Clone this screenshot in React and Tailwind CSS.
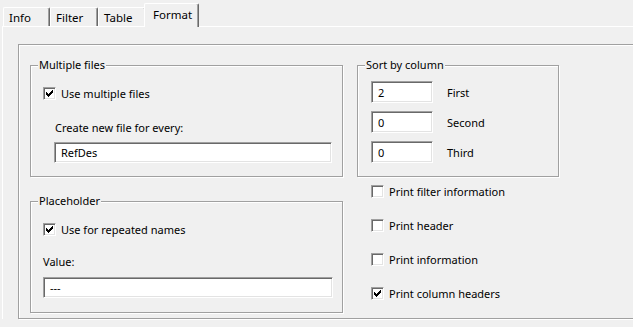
import React from 'react'

const sunken =
  'border border-t-[#a0a0a0] border-l-[#a0a0a0] border-b-white border-r-white shadow-[inset_1px_1px_0_#696969,inset_-1px_-1px_0_#e3e3e3] bg-white'

const etched = 'border border-[#a0a0a0] shadow-[inset_1px_1px_0_#ffffff,1px_1px_0_#ffffff]'

function Check({ checked }) {
  return (
    <span className={`${sunken} relative block h-[13px] w-[13px] shrink-0`}>
      {checked && (
        <svg
          width="7"
          height="7"
          viewBox="0 0 7 7"
          className="absolute left-[2px] top-[2px]"
          shapeRendering="crispEdges"
        >
          <path
            d="M0 2h1v3H0z M1 3h1v3H1z M2 4h1v3H2z M3 3h1v3H3z M4 2h1v3H4z M5 1h1v3H5z M6 0h1v3H6z"
            fill="#000"
          />
        </svg>
      )}
    </span>
  )
}

function CheckRow({ checked, label }) {
  return (
    <div className="flex h-[15px] items-center gap-[5px]">
      <Check checked={checked} />
      <span className="whitespace-nowrap">{label}</span>
    </div>
  )
}

function Field({ value, className }) {
  return (
    <div className={`${sunken} flex items-center pl-[6px] ${className}`}>
      <span className="whitespace-nowrap">{value}</span>
    </div>
  )
}

function GroupBox({ title, className, children }) {
  return (
    <div className={`${etched} relative ${className}`}>
      <span className="absolute -top-[9px] left-[7px] whitespace-nowrap bg-[#f0f0f0] px-[1px] leading-[15px]">
        {title}
      </span>
      {children}
    </div>
  )
}

function Tab({ label, active, className }) {
  if (active) {
    return (
      <div
        className={`relative z-10 -mb-px flex h-[24px] items-center rounded-t-[2px] border-l border-t border-r border-l-white border-t-white border-r-[#696969] bg-[#f0f0f0] pb-[3px] pl-[8px] shadow-[inset_-1px_0_0_#a0a0a0] ${className}`}
      >
        {label}
      </div>
    )
  }
  return (
    <div
      className={`flex h-[19px] items-center rounded-t-[2px] border-l border-t border-r border-l-white border-t-white border-r-[#696969] bg-[#f0f0f0] pl-[5px] shadow-[inset_-1px_0_0_#a0a0a0] ${className}`}
    >
      {label}
    </div>
  )
}

export default function App() {
  return (
    <div
      className="h-[327px] w-[633px] overflow-hidden bg-[#f0f0f0] text-[11px] leading-[15px] text-black"
      style={{ fontFamily: '"Noto Sans", "Liberation Sans", sans-serif' }}
    >
      <div className="flex h-[26px] items-end pl-[3px] text-[11.5px]">
        <Tab label="Info" className="w-[47px]" />
        <Tab label="Filter" className="w-[48px]" />
        <Tab label="Table" className="w-[48px]" />
        <Tab label="Format" active className="-ml-[2px] w-[55px]" />
      </div>

      <div className="ml-[2px] w-[700px] border-l border-t border-white pl-[15px] pt-[17px]">
        <div className={`${etched} flex w-[680px] gap-[14px] pb-[5px] pl-[11px] pt-[20px]`}>
          <div className="flex w-[313px] flex-col">
            <GroupBox title="Multiple files" className="flex flex-col pb-[13px] pl-[12px] pt-[20px]">
              <CheckRow checked label="Use multiple files" />
              <div className="ml-[12px] mt-[19px]">Create new file for every:</div>
              <Field value="RefDes" className="ml-[11px] mt-[7px] h-[21px] w-[278px]" />
            </GroupBox>

            <GroupBox title="Placeholder" className="mt-[24px] flex flex-col pb-[14px] pl-[12px] pt-[20px]">
              <CheckRow checked label="Use for repeated names" />
              <div className="mt-[17px]">Value:</div>
              <Field value="---" className="mt-[8px] h-[21px] w-[290px]" />
            </GroupBox>
          </div>

          <div className="flex w-[202px] flex-col">
            <GroupBox title="Sort by column" className="flex flex-col gap-[8px] pb-[13px] pl-[13px] pt-[15px]">
              {[
                ['2', 'First'],
                ['0', 'Second'],
                ['0', 'Third'],
              ].map(([v, l]) => (
                <div key={l} className="flex items-center gap-[14px]">
                  <Field value={v} className="h-[22px] w-[62px] pl-[5px]" />
                  <span>{l}</span>
                </div>
              ))}
            </GroupBox>

            <div className="mt-[7px] flex flex-col gap-[19px] pl-[14px]">
              <CheckRow label="Print filter information" />
              <CheckRow label="Print header" />
              <CheckRow label="Print information" />
              <CheckRow checked label="Print column headers" />
            </div>
          </div>
        </div>
      </div>
    </div>
  )
}
